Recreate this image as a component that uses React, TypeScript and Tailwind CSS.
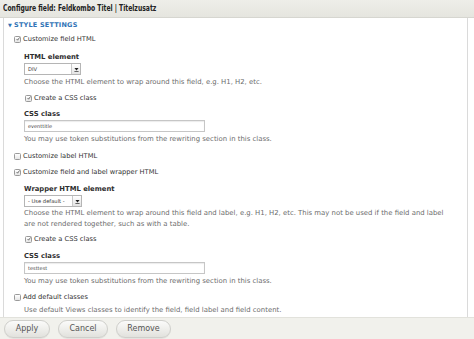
import React from "react";

const font = { fontFamily: '"DejaVu Sans", "Lucida Grande", sans-serif' };

function Check({ checked }: { checked?: boolean }) {
  return (
    <span className="inline-flex h-[7px] w-[7px] shrink-0 items-center justify-center rounded-[1.5px] border border-[#9a9a9a] bg-gradient-to-b from-white to-[#e6e6e6]">
      {checked && (
        <svg viewBox="0 0 10 10" className="-mt-[1px] ml-[1px] h-[8px] w-[8px]">
          <path d="M1.5 5.2 L4 8 L9 1" fill="none" stroke="#333" strokeWidth="1.7" />
        </svg>
      )}
    </span>
  );
}

function CheckRow({ checked, label, indent, className = "" }: { checked?: boolean; label: string; indent?: boolean; className?: string }) {
  return (
    <div className={`flex h-[10px] items-center gap-[2px] text-[6.7px] leading-[10px] text-[#333] ${indent ? "pl-[21px]" : "pl-[10px]"} ${className}`}>
      <Check checked={checked} />
      <span>{label}</span>
    </div>
  );
}

function Select({ value, width, className = "" }: { value: string; width: string; className?: string }) {
  return (
    <div className={`flex h-[12px] items-stretch border border-[#b5b5b5] bg-white ${width} ${className}`}>
      <span className="flex-1 overflow-hidden whitespace-nowrap pl-[3px] text-[5.2px] leading-[10px] text-[#333]">{value}</span>
      <span className="flex w-[9px] items-center justify-center border-l border-[#c8c8c8] bg-gradient-to-b from-white to-[#e4e4e4]">
        <svg viewBox="0 0 6 6" className="h-[5px] w-[5px]">
          <path d="M0.5 1.2 L5.5 1.2 L3 4.2 Z" fill="#222" />
          <path d="M0.5 5.4 L5.5 5.4" stroke="#222" strokeWidth="0.8" />
        </svg>
      </span>
    </div>
  );
}

function TextInput({ value, className = "" }: { value: string; className?: string }) {
  return (
    <div
      className={`h-[12px] w-[181px] border border-[#c6c6c6] bg-white pl-[3px] text-[5px] leading-[10px] text-[#444] shadow-[inset_0_1px_1px_rgba(0,0,0,0.08)] ${className}`}
    >
      {value}
    </div>
  );
}

function Help({ children, className = "" }: { children: React.ReactNode; className?: string }) {
  return <p className={`text-[6.9px] leading-[10px] text-[#6c6c6c] ${className}`}>{children}</p>;
}

function Label({ children, className = "" }: { children: React.ReactNode; className?: string }) {
  return <div className={`h-[10px] text-[6.8px] font-bold leading-[10px] text-[#2e2e2e] ${className}`}>{children}</div>;
}

function Button({ children, width }: { children: React.ReactNode; width: string }) {
  return (
    <button
      className={`h-[18px] ${width} rounded-full border border-[#cfcfcb] bg-gradient-to-b from-[#fbfbfa] to-[#e2e2dd] text-[8px] text-[#555] shadow-[0_1px_0_rgba(0,0,0,0.05)]`}
    >
      {children}
    </button>
  );
}

export default function App() {
  return (
    <div className="flex h-[339px] w-[474px] flex-col overflow-hidden bg-white" style={font}>
      <div className="flex h-[18px] shrink-0 items-center border-b border-[#d6d6d0] bg-gradient-to-b from-[#eeeee9] to-[#e5e5df] pl-[3px]">
        <h1
          className="origin-left scale-x-[0.71] whitespace-nowrap text-[9.5px] font-bold text-[#222]"
          style={{ fontFamily: '"DejaVu Sans Condensed", "DejaVu Sans", sans-serif' }}
        >
          Configure field: Feldkombo Titel | Titelzusatz
        </h1>
      </div>

      <div className="flex flex-1 overflow-hidden">
        <div className="ml-[3px] w-[465px] border-l border-r border-[#dadada] bg-white pt-[3px]">
          <div className="flex h-[10px] items-center gap-[2px] pl-[4px] text-[6.5px] font-bold tracking-[0.2px] text-[#2f73b6]">
            <span className="text-[5px]">▼</span>
            <span>STYLE SETTINGS</span>
          </div>

          <CheckRow checked label="Customize field HTML" className="mt-[3px]" />
          <div className="flex flex-col pl-[20px]">
            <Label className="mt-[8px]">HTML element</Label>
            <Select value="DIV" width="w-[57px]" className="mt-[1px]" />
            <Help className="mt-[2px]">Choose the HTML element to wrap around this field, e.g. H1, H2, etc.</Help>
          </div>
          <CheckRow checked indent label="Create a CSS class" className="mt-[6px]" />
          <div className="flex flex-col pl-[20px]">
            <Label className="mt-[6px]">CSS class</Label>
            <TextInput value="eventtitle" className="mt-[1px]" />
            <Help className="mt-[2px]">You may use token substitutions from the rewriting section in this class.</Help>
          </div>
          <CheckRow label="Customize label HTML" className="mt-[7px]" />
          <CheckRow checked label="Customize field and label wrapper HTML" className="mt-[6px]" />
          <div className="flex flex-col pl-[20px] pr-[12px]">
            <Label className="mt-[7px]">Wrapper HTML element</Label>
            <Select value="- Use default -" width="w-[58px]" className="mt-[1px]" />
            <Help className="mt-[1px] leading-[11px]">
              Choose the HTML element to wrap around this field and label, e.g. H1, H2, etc. This may not be used if the
              field and label are not rendered together, such as with a table.
            </Help>
          </div>
          <CheckRow checked indent label="Create a CSS class" className="mt-[4px]" />
          <div className="flex flex-col pl-[20px]">
            <Label className="mt-[7px]">CSS class</Label>
            <TextInput value="testtest" className="mt-[1px]" />
            <Help className="mt-[2px]">You may use token substitutions from the rewriting section in this class.</Help>
          </div>
          <CheckRow label="Add default classes" className="mt-[6px]" />
          <div className="pl-[20px]">
            <Help className="mt-[3px]">Use default Views classes to identify the field, field label and field content.</Help>
          </div>
        </div>
      </div>

      <div className="flex h-[22px] shrink-0 items-center gap-[8px] border-t border-[#e2e2dc] bg-[#f1f1ec] pl-[4px]">
        <Button width="w-[46px]">Apply</Button>
        <Button width="w-[50px]">Cancel</Button>
        <Button width="w-[55px]">Remove</Button>
      </div>
    </div>
  );
}
